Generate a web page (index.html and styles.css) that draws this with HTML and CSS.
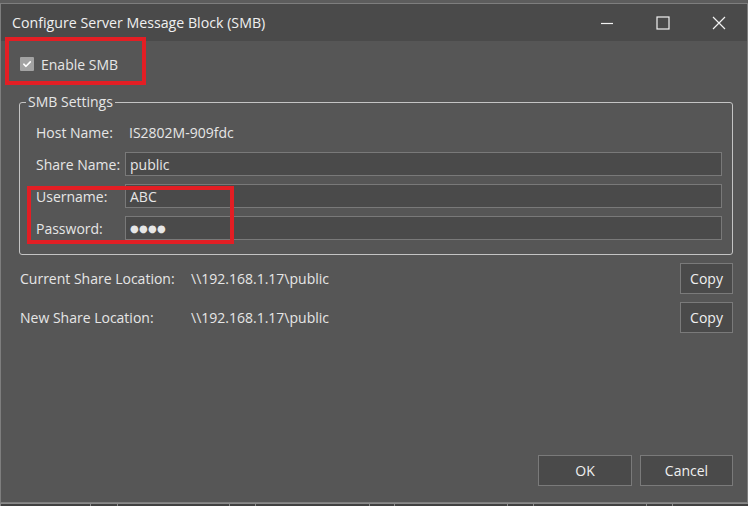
FILE: index.html
```html
<!DOCTYPE html>
<html>
<head>
<meta charset="utf-8">
<link rel="stylesheet" href="styles.css">
</head>
<body>
<div class="screen">
  <div class="window">
    <div class="titlebar">
      <span class="title">Configure Server Message Block (SMB)</span>
      <div class="controls">
        <span class="ctl"><svg width="14" height="14" viewBox="0 0 14 14"><path d="M1 7.5H13" stroke="#f2f2f2" stroke-width="1.2" fill="none"/></svg></span>
        <span class="ctl"><svg width="14" height="14" viewBox="0 0 14 14"><rect x="1" y="1" width="12" height="12" stroke="#f2f2f2" stroke-width="1.2" fill="none"/></svg></span>
        <span class="ctl"><svg width="14" height="14" viewBox="0 0 14 14"><path d="M1 1L13 13M13 1L1 13" stroke="#f2f2f2" stroke-width="1.2" fill="none"/></svg></span>
      </div>
    </div>
    <div class="content">
      <div class="check">
        <span class="box"><svg width="14" height="14" viewBox="0 0 14 14"><path d="M3.8 7.2L6 9.3L10.3 4.9" stroke="#ffffff" stroke-width="1.6" fill="none" stroke-linecap="round" stroke-linejoin="round"/></svg></span>
        <span class="check-text">Enable SMB</span>
      </div>
      <fieldset class="group">
        <legend>SMB Settings</legend>
        <div class="grid">
          <span class="lbl">Host Name:</span><span class="val">IS2802M-909fdc</span>
          <span class="lbl">Share Name:</span><div class="field">public</div>
          <span class="lbl">Username:</span><div class="field">ABC</div>
          <span class="lbl">Password:</span><div class="field"><span class="dots">●●●●</span></div>
        </div>
      </fieldset>
      <div class="loc">
        <span class="loc-label">Current Share Location:</span>
        <span class="loc-val">\\192.168.1.17\public</span>
        <span class="btn copy">Copy</span>
      </div>
      <div class="loc">
        <span class="loc-label">New Share Location:</span>
        <span class="loc-val">\\192.168.1.17\public</span>
        <span class="btn copy">Copy</span>
      </div>
      <div class="footer">
        <span class="btn ok">OK</span>
        <span class="btn cancel">Cancel</span>
      </div>
    </div>
  </div>
  <div class="strip">
    <span class="tab w90">Restart</span><span class="tab w27"></span>
    <span class="tab w112">Backup</span><span class="tab w26"></span>
    <span class="tab w114">Restore</span><span class="tab w25"></span>
    <span class="tab w113">User Settings</span><span class="tab w26"></span>
    <span class="tab w113 dim">Network</span><span class="tab w26"></span>
    <span class="tab w76 dim">Server</span>
  </div>
  <div class="mark mark-enable"></div>
  <div class="mark mark-cred"></div>
</div>
</body>
</html>
```
FILE: styles.css
```css
html, body {
  margin: 0;
  padding: 0;
}
body {
  width: 748px;
  height: 506px;
  overflow: hidden;
  background: #5d5d5d;
  font-family: "Open Sans", "Noto Sans", "DejaVu Sans", sans-serif;
  font-size: 14px;
  color: #e6e6e6;
}
.screen {
  position: relative;
  width: 748px;
  height: 506px;
  padding-top: 3px;
  box-sizing: border-box;
  display: flex;
  flex-direction: column;
}
.window {
  width: 748px;
  height: 500px;
  box-sizing: border-box;
  border: 1px solid #7e7e7e;
  background: #565656;
  display: flex;
  flex-direction: column;
}
.titlebar {
  height: 37px;
  flex: none;
  background: #4a4a4a;
  display: flex;
  align-items: center;
}
.title {
  padding-left: 11px;
  color: #f0f0f0;
  font-size: 14.2px;
  flex: 1;
}
.controls {
  display: flex;
  height: 100%;
}
.ctl {
  width: 56px;
  display: flex;
  align-items: center;
  justify-content: center;
}
.content {
  flex: 1;
  display: flex;
  flex-direction: column;
}
.check {
  margin-top: 14px;
  margin-left: 19px;
  height: 18px;
  display: flex;
  align-items: center;
}
.box {
  width: 14px;
  height: 14px;
  background: #a3a3a3;
  border-radius: 1px;
  display: flex;
}
.check-text {
  margin-left: 7px;
}
.group {
  margin: 20px 14px 0 18px;
  padding: 9px 10px 14px 6px;
  border: 1px solid #c4c4c4;
  border-radius: 3px;
}
.group legend {
  padding: 0 2px;
  line-height: 18px;
}
.grid {
  margin-left: 10px;
  display: grid;
  grid-template-columns: 89px 1fr;
  grid-auto-rows: 24px;
  row-gap: 8px;
  align-items: center;
}
.val {
  padding-left: 4px;
}
.field {
  height: 24px;
  box-sizing: border-box;
  border: 1px solid #797979;
  background: #4a4a4a;
  padding-left: 4px;
  display: flex;
  align-items: center;
}
.dots {
  font-family: "DejaVu Sans", sans-serif;
  font-size: 10px;
  letter-spacing: 0.3px;
}
.loc {
  margin: 8px 14px 0 19px;
  height: 31px;
  display: flex;
  align-items: center;
}
.loc-label {
  width: 171px;
  flex: none;
}
.loc-val {
  flex: 1;
}
.btn {
  box-sizing: border-box;
  height: 31px;
  border: 1px solid #7a7a7a;
  background: #4a4a4a;
  display: flex;
  align-items: center;
  justify-content: center;
  color: #f0f0f0;
}
.copy {
  width: 53px;
}
.footer {
  margin-top: auto;
  padding: 0 14px 16px 0;
  display: flex;
  justify-content: flex-end;
  gap: 8px;
}
.ok {
  width: 94px;
}
.cancel {
  width: 93px;
}
.strip {
  height: 3px;
  display: flex;
  overflow: hidden;
  background: #3c3c3c;
}
.tab {
  flex: none;
  box-sizing: border-box;
  border-left: 1px solid #8a8a8a;
  border-top: 1px solid #8a8a8a;
  background: #404040;
  font-size: 13px;
  line-height: 18px;
  color: #d8e4ff;
  padding-top: 1px;
  text-align: center;
  overflow: hidden;
  white-space: nowrap;
}
.tab.dim { color: #9a9a9a; }
.w90 { width: 90px; }
.w27 { width: 27px; }
.w112 { width: 112px; }
.w26 { width: 26px; }
.w114 { width: 114px; }
.w25 { width: 25px; }
.w113 { width: 113px; }
.w76 { width: 76px; }
.mark {
  position: absolute;
  border: 4px solid #e31e24;
  box-sizing: border-box;
}
.mark-enable {
  left: 5px;
  top: 37px;
  width: 141px;
  height: 48px;
}
.mark-cred {
  left: 27px;
  top: 186px;
  width: 207px;
  height: 58px;
}
```
